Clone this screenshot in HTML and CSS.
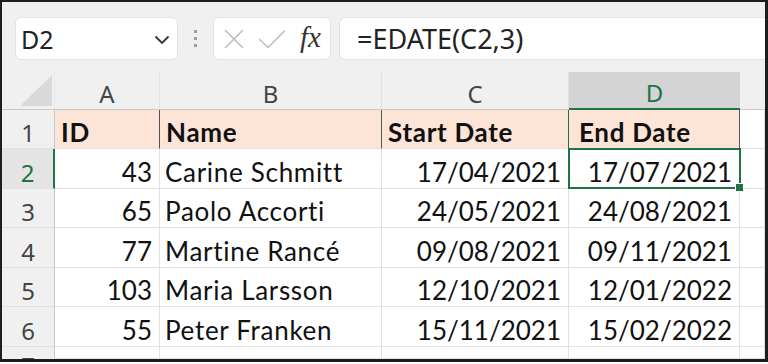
FILE: index.html
```html
<!DOCTYPE html>
<html lang="en">
<head>
    <meta charset="UTF-8">
    <meta name="viewport" content="width=device-width, initial-scale=1.0">
    <title>EDATE</title>
    <link rel="stylesheet" href="styles.css">
</head>
<body>
    <div class="window">
        <div class="formula-bar">
            <div class="name-box">
                <span>D2</span>
                <svg class="chevron" width="16" height="10" viewBox="0 0 16 10">
                    <path d="M1.5 1.5 L8 8 L14.5 1.5" fill="none" stroke="#333" stroke-width="1.8"/>
                </svg>
            </div>
            <div class="grip"><i></i><i></i><i></i></div>
            <div class="fx-box">
                <svg class="cancel" width="22" height="20" viewBox="0 0 22 20">
                    <path d="M2 1 L20 19 M20 1 L2 19" fill="none" stroke="#bdbdbd" stroke-width="1.6"/>
                </svg>
                <svg class="enter" width="28" height="20" viewBox="0 0 28 20">
                    <path d="M1 10 L10 18.5 L27 1.5" fill="none" stroke="#bdbdbd" stroke-width="1.6"/>
                </svg>
                <span class="fx">fx</span>
            </div>
            <div class="formula">=EDATE(C2,3)</div>
        </div>

        <div class="sheet">
            <!-- column headers -->
            <div class="corner">
                <svg width="33" height="32" viewBox="0 0 33 32"><path d="M32 0 L32 31 L0 31 Z" fill="#d9d9d9"/></svg>
            </div>
            <div class="col-head">A</div>
            <div class="col-head">B</div>
            <div class="col-head">C</div>
            <div class="col-head active">D</div>
            <div class="col-head blank"></div>

            <!-- row 1 -->
            <div class="row-head">1</div>
            <div class="cell head">ID</div>
            <div class="cell head">Name</div>
            <div class="cell head">Start Date</div>
            <div class="cell head end-date">End Date</div>
            <div class="cell"></div>

            <!-- row 2 -->
            <div class="row-head active">2</div>
            <div class="cell num">43</div>
            <div class="cell">Carine Schmitt</div>
            <div class="cell num">17/04/2021</div>
            <div class="cell num selected">17/07/2021</div>
            <div class="cell"></div>

            <div class="row-head">3</div>
            <div class="cell num">65</div>
            <div class="cell">Paolo Accorti</div>
            <div class="cell num">24/05/2021</div>
            <div class="cell num">24/08/2021</div>
            <div class="cell"></div>

            <div class="row-head">4</div>
            <div class="cell num">77</div>
            <div class="cell">Martine Rancé</div>
            <div class="cell num">09/08/2021</div>
            <div class="cell num">09/11/2021</div>
            <div class="cell"></div>

            <div class="row-head">5</div>
            <div class="cell num">103</div>
            <div class="cell">Maria Larsson</div>
            <div class="cell num">12/10/2021</div>
            <div class="cell num">12/01/2022</div>
            <div class="cell"></div>

            <div class="row-head">6</div>
            <div class="cell num">55</div>
            <div class="cell">Peter Franken</div>
            <div class="cell num">15/11/2021</div>
            <div class="cell num">15/02/2022</div>
            <div class="cell"></div>

            <!-- row 7, cut off by the frame -->
            <div class="row-head last"><span>7</span></div>
            <div class="cell"></div>
            <div class="cell"></div>
            <div class="cell"></div>
            <div class="cell"></div>
            <div class="cell"></div>
        </div>
    </div>
</body>
</html>
```

FILE: styles.css
```css
* {
    box-sizing: border-box;
}

body {
    margin: 0;
    padding: 0;
    background: #fff;
    overflow: hidden;
}

.window {
    width: 768px;
    height: 362px;
    border-style: solid;
    border-color: #1e1e1e;
    border-width: 2px 3px 3px 2px;
    background: #f0f0f0;
    display: flex;
    flex-direction: column;
    overflow: hidden;
}

/* formula bar */

.formula-bar {
    flex: 0 0 70px;
    display: flex;
    align-items: flex-start;
    padding: 15px 0 0 13px;
    font-family: "Noto Sans", sans-serif;
    color: #222;
}

.name-box {
    width: 163px;
    height: 43px;
    background: #fff;
    border: 1px solid #e3e3e3;
    border-radius: 6px;
    display: flex;
    align-items: center;
    justify-content: space-between;
    padding: 0 7px 0 5px;
    font-size: 25px;
}

.chevron {
    margin-top: 2px;
}

.grip {
    width: 35px;
    height: 43px;
    display: flex;
    flex-direction: column;
    align-items: center;
    justify-content: center;
    gap: 4px;
}

.grip i {
    display: block;
    width: 3px;
    height: 3px;
    background: #9e9e9e;
}

.fx-box {
    width: 118px;
    height: 43px;
    background: #fff;
    border: 1px solid #e3e3e3;
    border-radius: 6px;
    display: flex;
    align-items: center;
    padding: 0 0 0 9px;
}

.cancel {
    margin-right: 13px;
}

.enter {
    margin-right: 14px;
}

.fx {
    font-family: "Liberation Serif", serif;
    font-style: italic;
    font-size: 29px;
    color: #333;
    margin-top: -3px;
}

.formula {
    flex: 1;
    height: 43px;
    margin-left: 8px;
    background: #fff;
    border: 1px solid #e3e3e3;
    border-right: none;
    border-radius: 6px 0 0 6px;
    display: flex;
    align-items: center;
    padding-left: 17px;
    font-size: 27px;
}

/* sheet */

.sheet {
    flex: 1;
    min-height: 0;
    overflow: hidden;
    display: grid;
    grid-template-columns: 53px 105px 222px 187px 171px 1fr;
    grid-template-rows: 38px 39px 40px 39px 40px 39px 40px minmax(0, 1fr);
    background: #fff;
    font-family: Lato, sans-serif;
    font-size: 26px;
    color: #111;
}

.corner,
.col-head {
    background: #f0f0f0;
    border-bottom: 1px solid #c9c9c9;
}

.corner {
    display: flex;
    justify-content: flex-end;
    align-items: flex-start;
    padding: 3px 1px 0 0;
    border-right: 1px solid #e6e6e6;
}

.col-head {
    display: flex;
    align-items: flex-end;
    justify-content: center;
    font-family: "Noto Sans", sans-serif;
    font-size: 24px;
    line-height: 1.3;
    color: #444;
    border-right: 1px solid #e0e0e0;
}

.col-head.active {
    background: #d4d4d4;
    color: #217346;
    border-bottom: 2px solid #217346;
    border-right: none;
}

.col-head.blank {
    border-right: none;
}

.row-head {
    background: #f0f0f0;
    border-right: 1px solid #c9c9c9;
    border-bottom: 1px solid #e0e0e0;
    display: flex;
    align-items: flex-end;
    justify-content: center;
    font-family: "Noto Sans", sans-serif;
    font-size: 24px;
    line-height: 1.3;
    color: #444;
    overflow: hidden;
}

.row-head.active {
    background: #e4e4e4;
    color: #217346;
    border-right: 2px solid #217346;
}

.row-head.last {
    align-items: flex-start;
    border-bottom: none;
}

.row-head.last span {
    margin-top: 3px;
}

.cell {
    border-right: 1px solid #e1e1e1;
    border-bottom: 1px solid #e1e1e1;
    display: flex;
    align-items: flex-end;
    padding: 0 6px 0 5px;
    white-space: nowrap;
    letter-spacing: 0.7px;
}

.cell.num {
    justify-content: flex-end;
    padding-right: 7px;
    letter-spacing: 0;
}

.cell.head {
    background: #fce4d6;
    font-weight: bold;
    border-right: 1px solid #555;
    padding-left: 6px;
}

.cell.head.end-date {
    padding-left: 10px;
    border-left: 1px solid #217346;
    margin-left: -1px;
}

.cell.selected {
    position: relative;
}

.cell.selected::after {
    content: "";
    position: absolute;
    left: -1px;
    top: -1px;
    right: -2px;
    bottom: -1px;
    border: 2px solid #217346;
}

.cell.selected::before {
    content: "";
    position: absolute;
    right: -5px;
    bottom: -4px;
    width: 7px;
    height: 7px;
    background: #217346;
    border: 1px solid #fff;
    z-index: 1;
}
```
